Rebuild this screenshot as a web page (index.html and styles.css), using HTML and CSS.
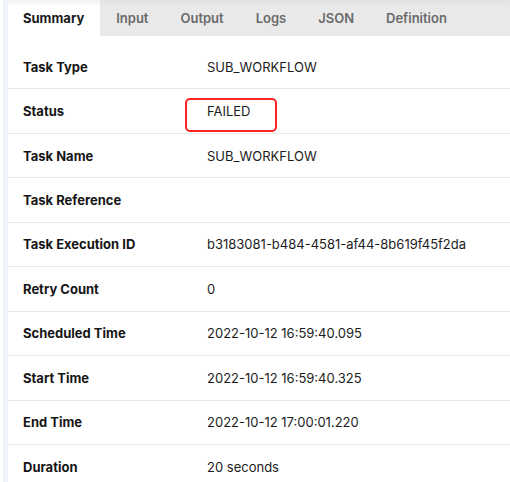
FILE: index.html
```html
<!DOCTYPE html>
<html>
<head>
<meta charset="utf-8">
<link rel="stylesheet" href="styles.css">
</head>
<body>
<div class="page">
  <div class="gutter"></div>
  <div class="panel">
    <div class="tabs">
      <div class="tab active">Summary</div>
      <div class="tab">Input</div>
      <div class="tab">Output</div>
      <div class="tab">Logs</div>
      <div class="tab">JSON</div>
      <div class="tab">Definition</div>
    </div>
    <div class="rows">
      <div class="row"><div class="label">Task Type</div><div class="value">SUB_WORKFLOW</div></div>
      <div class="row"><div class="label">Status</div><div class="value status">FAILED<span class="mark"></span></div></div>
      <div class="row"><div class="label">Task Name</div><div class="value">SUB_WORKFLOW</div></div>
      <div class="row"><div class="label">Task Reference</div><div class="value"></div></div>
      <div class="row"><div class="label">Task Execution ID</div><div class="value">b3183081-b484-4581-af44-8b619f45f2da</div></div>
      <div class="row"><div class="label">Retry Count</div><div class="value">0</div></div>
      <div class="row"><div class="label">Scheduled Time</div><div class="value">2022-10-12 16:59:40.095</div></div>
      <div class="row"><div class="label">Start Time</div><div class="value">2022-10-12 16:59:40.325</div></div>
      <div class="row"><div class="label">End Time</div><div class="value">2022-10-12 17:00:01.220</div></div>
      <div class="row"><div class="label">Duration</div><div class="value">20 seconds</div></div>
    </div>
  </div>
</div>
</body>
</html>
```
FILE: styles.css
```css
html, body {
  margin: 0;
  padding: 0;
  background: #ffffff;
}
body {
  font-family: Inter, "Liberation Sans", sans-serif;
  color: #1f1f1f;
  width: 510px;
  height: 482px;
  overflow: hidden;
}
.page {
  display: flex;
  height: 482px;
}
.gutter {
  width: 5px;
  margin-left: 3px;
  background: #f0f4f8;
  flex: none;
}
.panel {
  flex: 1;
  display: flex;
  flex-direction: column;
  min-width: 0;
}
.tabs {
  display: flex;
  height: 36px;
  background: linear-gradient(#e2e2e2 0, #e9e9e9 6px, #e9e9e9 100%);
  flex: none;
}
.tab {
  padding: 0 16px;
  display: flex;
  align-items: center;
  font-size: 13px;
  font-weight: 600;
  color: #6a6a6a;
}
.tab.active {
  background: linear-gradient(#f2f2f2 0, #ffffff 6px, #ffffff 100%);
  color: #1a1a1a;
  font-weight: 700;
  padding-left: 15px;
  padding-right: 16px;
}
.rows {
  padding-top: 9px;
}
.row {
  display: grid;
  grid-template-columns: 184px 1fr;
  align-items: center;
  height: 44.45px;
  box-sizing: border-box;
  border-bottom: 1px solid #e6e6e6;
  padding-left: 15px;
  font-size: 13px;
}
.label {
  font-weight: 700;
  color: #161616;
}
.value {
  color: #1c1c1c;
}
.status {
  position: relative;
}
.mark {
  position: absolute;
  left: -22px;
  top: -5px;
  width: 88px;
  height: 30px;
  border: 2px solid #ff2222;
  border-radius: 5px;
}
```
